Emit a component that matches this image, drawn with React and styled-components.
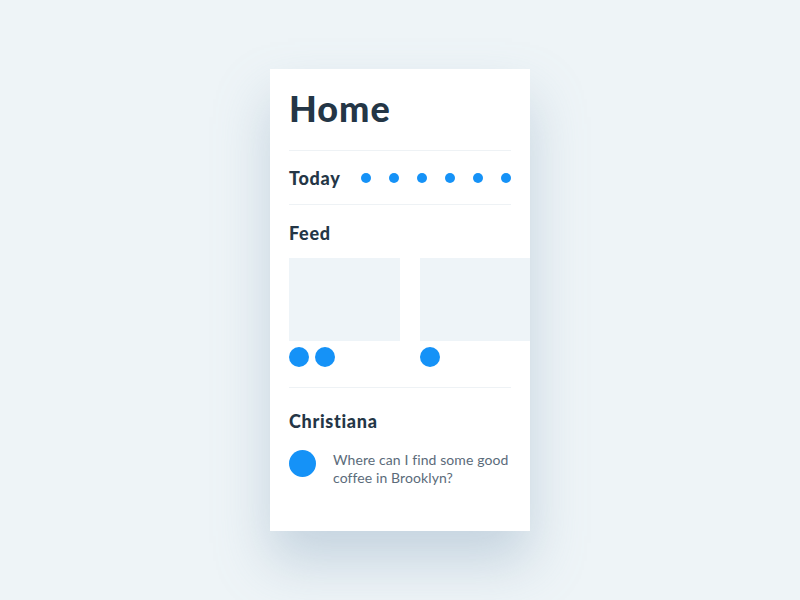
import styled, { createGlobalStyle } from "styled-components";

const GlobalStyle = createGlobalStyle`
  html, body {
    margin: 0;
    padding: 0;
    background: #eef4f7;
  }
  body {
    font-family: Lato, "Open Sans", sans-serif;
  }
`

const Pagina = styled.div`
  width: 800px;
  height: 600px;
  display: flex;
  justify-content: center;
  padding-top: 69px;
  box-sizing: border-box;
  background: #eef4f7;
  overflow: hidden;
`

const Cartao = styled.div`
  width: 260px;
  height: 462px;
  box-sizing: border-box;
  padding: 0 19px;
  background: #ffffff;
  overflow: hidden;
  box-shadow: 0 30px 50px 0 rgba(140, 168, 190, 0.42);
`

const Titulo = styled.h1`
  margin: 0;
  padding: 18px 0 21px;
  font-size: 36px;
  line-height: 42px;
  font-weight: 900;
  color: #243646;
  letter-spacing: 1px;
`

const Divisor = styled.div`
  height: 1px;
  background: #eef2f5;
`

const LinhaHoje = styled.div`
  height: 53px;
  display: flex;
  align-items: center;
  justify-content: space-between;
`

const Rotulo = styled.div`
  font-size: 18px;
  font-weight: 900;
  color: #243646;
  line-height: 22px;
  letter-spacing: 0.7px;
`

const Pontos = styled.div`
  display: flex;
  gap: 18px;
`

const Ponto = styled.span`
  width: ${p => p.$tam}px;
  height: ${p => p.$tam}px;
  border-radius: 50%;
  background: #1592f7;
  flex-shrink: 0;
`

const Secao = styled.div`
  padding-top: ${p => p.$topo}px;
`

const FeedLinha = styled.div`
  display: flex;
  gap: 20px;
  margin-top: 14px;
  margin-right: -40px;
`

const FeedItem = styled.div`
  width: ${p => p.$largura}px;
  flex-shrink: 0;
  display: flex;
  flex-direction: column;
  gap: 6px;
`

const Miniatura = styled.div`
  height: 83px;
  background: #eef4f8;
`

const Bolinhas = styled.div`
  display: flex;
  gap: 6px;
`

const Mensagem = styled.div`
  display: flex;
  align-items: flex-start;
  gap: 17px;
  margin-top: 19px;
`

const Avatar = styled.div`
  width: 27px;
  height: 27px;
  border-radius: 50%;
  background: #1592f7;
  flex-shrink: 0;
  margin-top: -1px;
`

const TextoMensagem = styled.p`
  margin: 0;
  font-size: 14px;
  line-height: 18px;
  color: #5b6b7a;
  font-weight: 400;
  letter-spacing: 0.1px;
`

const App = () => {
  return (
    <Pagina>
      <GlobalStyle />
      <Cartao>
        <Titulo>Home</Titulo>
        <Divisor />
        <LinhaHoje>
          <Rotulo>Today</Rotulo>
          <Pontos>
            {[0, 1, 2, 3, 4, 5].map(i => <Ponto key={i} $tam={10} />)}
          </Pontos>
        </LinhaHoje>
        <Divisor />

        <Secao $topo={17}>
          <Rotulo>Feed</Rotulo>
          <FeedLinha>
            <FeedItem $largura={111}>
              <Miniatura />
              <Bolinhas>
                <Ponto $tam={20} />
                <Ponto $tam={20} />
              </Bolinhas>
            </FeedItem>
            <FeedItem $largura={130}>
              <Miniatura />
              <Bolinhas>
                <Ponto $tam={20} />
              </Bolinhas>
            </FeedItem>
          </FeedLinha>
        </Secao>

        <Secao $topo={20}>
          <Divisor />
        </Secao>

        <Secao $topo={22}>
          <Rotulo>Christiana</Rotulo>
          <Mensagem>
            <Avatar />
            <TextoMensagem>Where can I find some good coffee in Brooklyn?</TextoMensagem>
          </Mensagem>
        </Secao>
      </Cartao>
    </Pagina>
  )
};

export default App;
